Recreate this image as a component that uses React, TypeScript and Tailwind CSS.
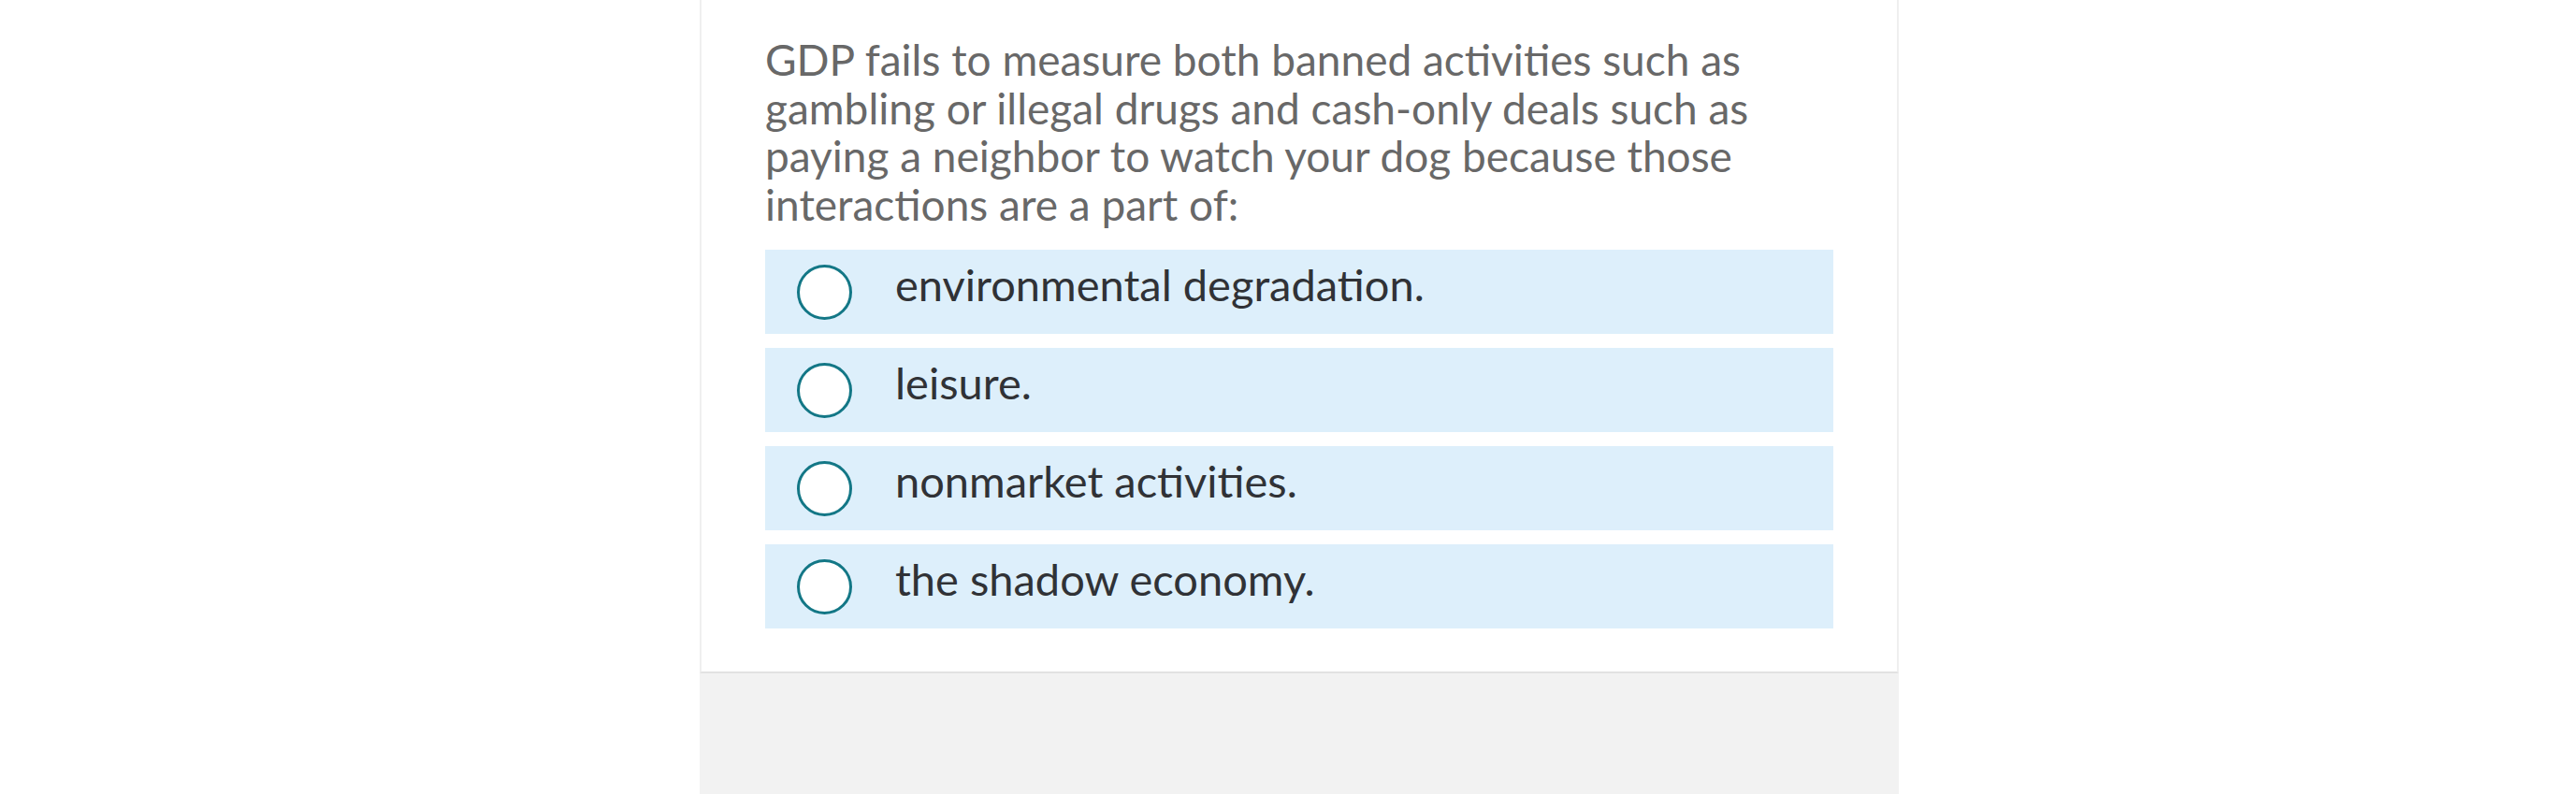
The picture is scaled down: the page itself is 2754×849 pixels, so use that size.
const options = [
  "environmental degradation.",
  "leisure.",
  "nonmarket activities.",
  "the shadow economy.",
];

const questionLines = [
  "GDP fails to measure both banned activities such as",
  "gambling or illegal drugs and cash-only deals such as",
  "paying a neighbor to watch your dog because those",
  "interactions are a part of:",
];

function RadioOption({ label }: { label: string }) {
  return (
    <label className="flex h-[90px] w-full cursor-pointer items-center bg-[#ddeffb] pl-[34px]">
      <span className="h-[59px] w-[59px] shrink-0 rounded-full border-[3px] border-[#137786] bg-white"></span>
      <span className="ml-[46px] whitespace-nowrap pb-[16px] text-[47px] leading-none text-[#303236]">
        {label}
      </span>
    </label>
  );
}

export default function App() {
  return (
    <div
      className="min-h-screen w-full bg-white"
      style={{ fontFamily: "Lato, 'Open Sans', sans-serif" }}
    >
      <div className="ml-[748px] flex w-[1282px] flex-col">
        <div className="border-x-2 border-b-2 border-x-[#efefef] border-b-[#e2e2e2] bg-white px-[68px] pb-[46px] pt-[38px]">
          <p className="text-[46px] leading-[51.5px] text-[#686868]">
            {questionLines.map((line) => (
              <span key={line} className="block whitespace-nowrap">
                {line}
              </span>
            ))}
          </p>
          <div className="mt-[23px] flex flex-col gap-[15px]">
            {options.map((o) => (
              <RadioOption key={o} label={o} />
            ))}
          </div>
        </div>
        <div className="h-[160px] border-x-2 border-[#f2f2f2] bg-[#f2f2f2]"></div>
      </div>
    </div>
  );
}
